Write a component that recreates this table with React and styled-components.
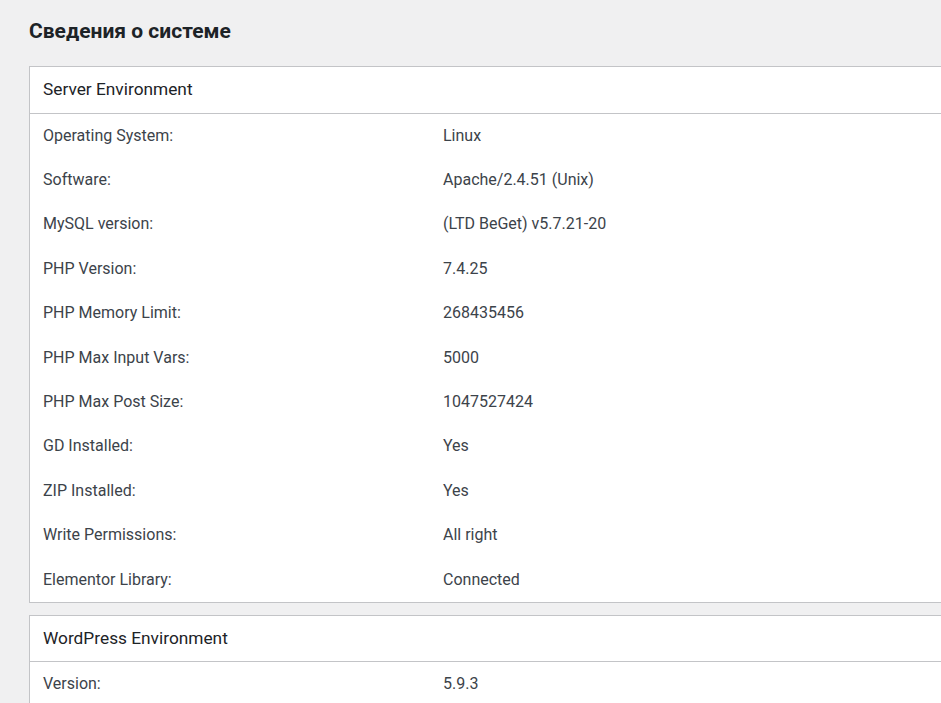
import React from "react";
import styled, { createGlobalStyle } from "styled-components";

const GlobalStyle = createGlobalStyle`
  html, body {
    margin: 0;
    padding: 0;
    background: #f0f0f1;
    overflow: hidden;
  }
  body {
    font-family: Roboto, "Noto Sans", Arial, sans-serif;
    color: #3c434a;
  }
`;

const Page = styled.div`
  padding: 16px 0 0 29px;
  width: 1400px;
`;

const Title = styled.h1`
  margin: 0 0 20px;
  font-size: 21px;
  line-height: 30px;
  font-weight: 700;
  color: #1d2327;
`;

const Table = styled.div`
  background: #fff;
  border: 1px solid #c3c4c7;
  width: 1300px;
  margin-bottom: 12px;
`;

const Head = styled.div`
  padding: 11px 13px;
  font-size: 17.3px;
  line-height: 23.5px;
  color: #1d2327;
  border-bottom: 1px solid #c3c4c7;
`;

const Row = styled.div`
  display: grid;
  grid-template-columns: 400px 1fr;
  padding: 11px 13px;
  font-size: 16px;
  line-height: 22.4px;
`;

const Label = styled.span`
  color: #3c434a;
`;

const Value = styled.span`
  color: #3c434a;
`;

const server = [
  ["Operating System:", "Linux"],
  ["Software:", "Apache/2.4.51 (Unix)"],
  ["MySQL version:", "(LTD BeGet) v5.7.21-20"],
  ["PHP Version:", "7.4.25"],
  ["PHP Memory Limit:", "268435456"],
  ["PHP Max Input Vars:", "5000"],
  ["PHP Max Post Size:", "1047527424"],
  ["GD Installed:", "Yes"],
  ["ZIP Installed:", "Yes"],
  ["Write Permissions:", "All right"],
  ["Elementor Library:", "Connected"],
];

const wordpress = [["Version:", "5.9.3"]];

const InfoTable = ({ title, rows }) => (
  <Table>
    <Head>{title}</Head>
    {rows.map(([label, value]) => (
      <Row key={label}>
        <Label>{label}</Label>
        <Value>{value}</Value>
      </Row>
    ))}
  </Table>
);

export default function App() {
  return (
    <Page>
      <GlobalStyle />
      <Title>Сведения о системе</Title>
      <InfoTable title="Server Environment" rows={server} />
      <InfoTable title="WordPress Environment" rows={wordpress} />
    </Page>
  );
}
